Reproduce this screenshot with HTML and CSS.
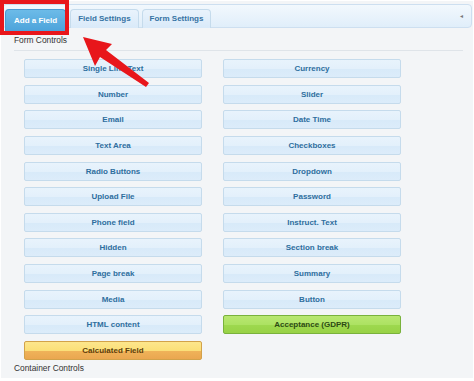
FILE: index.html
```html
<!DOCTYPE html>
<html lang="en">
<head>
  <meta charset="UTF-8">
  <meta name="viewport" content="width=device-width, initial-scale=1.0">
  <title>Form Builder - Add a Field</title>
<link rel="stylesheet" href="styles.css">
</head>
<body>
  <div class="panel">
    <div class="tabs">
      <a href="#" class="tab active">Add a Field</a>
      <a href="#" class="tab">Field Settings</a>
      <a href="#" class="tab">Form Settings</a>
      <span class="collapse">&#9666;</span>
    </div>

    <div class="section-title">Form Controls</div>

    <div class="controls">
      <button class="control">Single Line Text</button>
      <button class="control">Currency</button>
      <button class="control">Number</button>
      <button class="control">Slider</button>
      <button class="control">Email</button>
      <button class="control">Date Time</button>
      <button class="control">Text Area</button>
      <button class="control">Checkboxes</button>
      <button class="control">Radio Buttons</button>
      <button class="control">Dropdown</button>
      <button class="control">Upload File</button>
      <button class="control">Password</button>
      <button class="control">Phone field</button>
      <button class="control">Instruct. Text</button>
      <button class="control">Hidden</button>
      <button class="control">Section break</button>
      <button class="control">Page break</button>
      <button class="control">Summary</button>
      <button class="control">Media</button>
      <button class="control">Button</button>
      <button class="control">HTML content</button>
      <button class="control gdpr">Acceptance (GDPR)</button>
      <button class="control calculated">Calculated Field</button>
    </div>

    <div class="section-title last">Container Controls</div>
  </div>

  <!-- annotation over the screenshot -->
  <div class="highlight"></div>
  <svg class="arrow" width="474" height="381" viewBox="0 0 474 381">
    <polygon points="83,37 112,44 106,50 149,83 146,87 100,57 95,66" fill="#e8161b"/>
  </svg>
</body>
</html>
```

FILE: styles.css
```css
body {
  margin: 0;
  background-color: #fff;
  font-family: "Liberation Sans", Arial, sans-serif;
  position: relative;
}

.panel {
  margin: 1px 1px 0;
  height: 377px;
  background-color: #f3f5f7;
}

.tabs {
  margin: 0 1px;
  position: relative;
  top: 3px;
  padding: 4px 0 0 2px;
  box-sizing: border-box;
  height: 24px;
  display: flex;
  align-items: flex-start;
  gap: 3px;
  border: 1px solid #cddff0;
  border-radius: 4px;
  background: linear-gradient(#f2f8fd, #e0eefa);
}

.tab {
  display: block;
  height: 18px;
  line-height: 17px;
  padding: 0 7px;
  font-size: 8px;
  font-weight: bold;
  color: #3572a3;
  text-decoration: none;
  border: 1px solid #c5dbec;
  border-bottom: none;
  border-radius: 4px 4px 0 0;
  background: linear-gradient(#e9f3fc, #d9eaf9);
}

.tab.active {
  height: 22px;
  line-height: 22px;
  padding: 0 8px;
  margin-right: 1px;
  color: #fff;
  border-color: #4a9bd2;
  background: linear-gradient(#6cbbe8, #4ba2da);
}

.collapse {
  margin-left: auto;
  margin-right: 8px;
  margin-top: 3px;
  font-size: 6px;
  color: #777;
}

.section-title {
  margin: 0 10px 0 13px;
  padding: 10px 0 5px;
  line-height: 10px;
  font-size: 8.4px;
  color: #333;
  border-bottom: 1px solid #dfe4e9;
}

.section-title.last {
  border-bottom: none;
  padding: 3px 0 0;
}

.controls {
  margin: 8px 0 0 23px;
  display: grid;
  grid-template-columns: 178px 178px;
  column-gap: 21px;
  row-gap: 6.64px;
}

.control {
  height: 19px;
  padding: 0;
  font-family: "Liberation Sans", Arial, sans-serif;
  font-size: 8px;
  font-weight: bold;
  color: #2e6e9e;
  border: 1px solid #c5dbec;
  border-radius: 2px;
  background: linear-gradient(#e8f3fc 0%, #e3f0fb 50%, #d8eaf9 55%, #dcecfa 100%);
}

.control.gdpr {
  color: #2c4a12;
  border-color: #79b23c;
  background: linear-gradient(#b8e770 0%, #ade263 50%, #9dd84e 55%, #98d246 100%);
}

.control.calculated {
  color: #5d3d0a;
  border-color: #d2a24a;
  background: linear-gradient(#fde68c 0%, #fbdf78 50%, #efb259 55%, #eaa750 100%);
}

.highlight {
  position: absolute;
  left: 0;
  top: 0;
  width: 61px;
  height: 27px;
  border: 4px solid #e8161b;
}

.arrow {
  position: absolute;
  left: 0;
  top: 0;
}
```
